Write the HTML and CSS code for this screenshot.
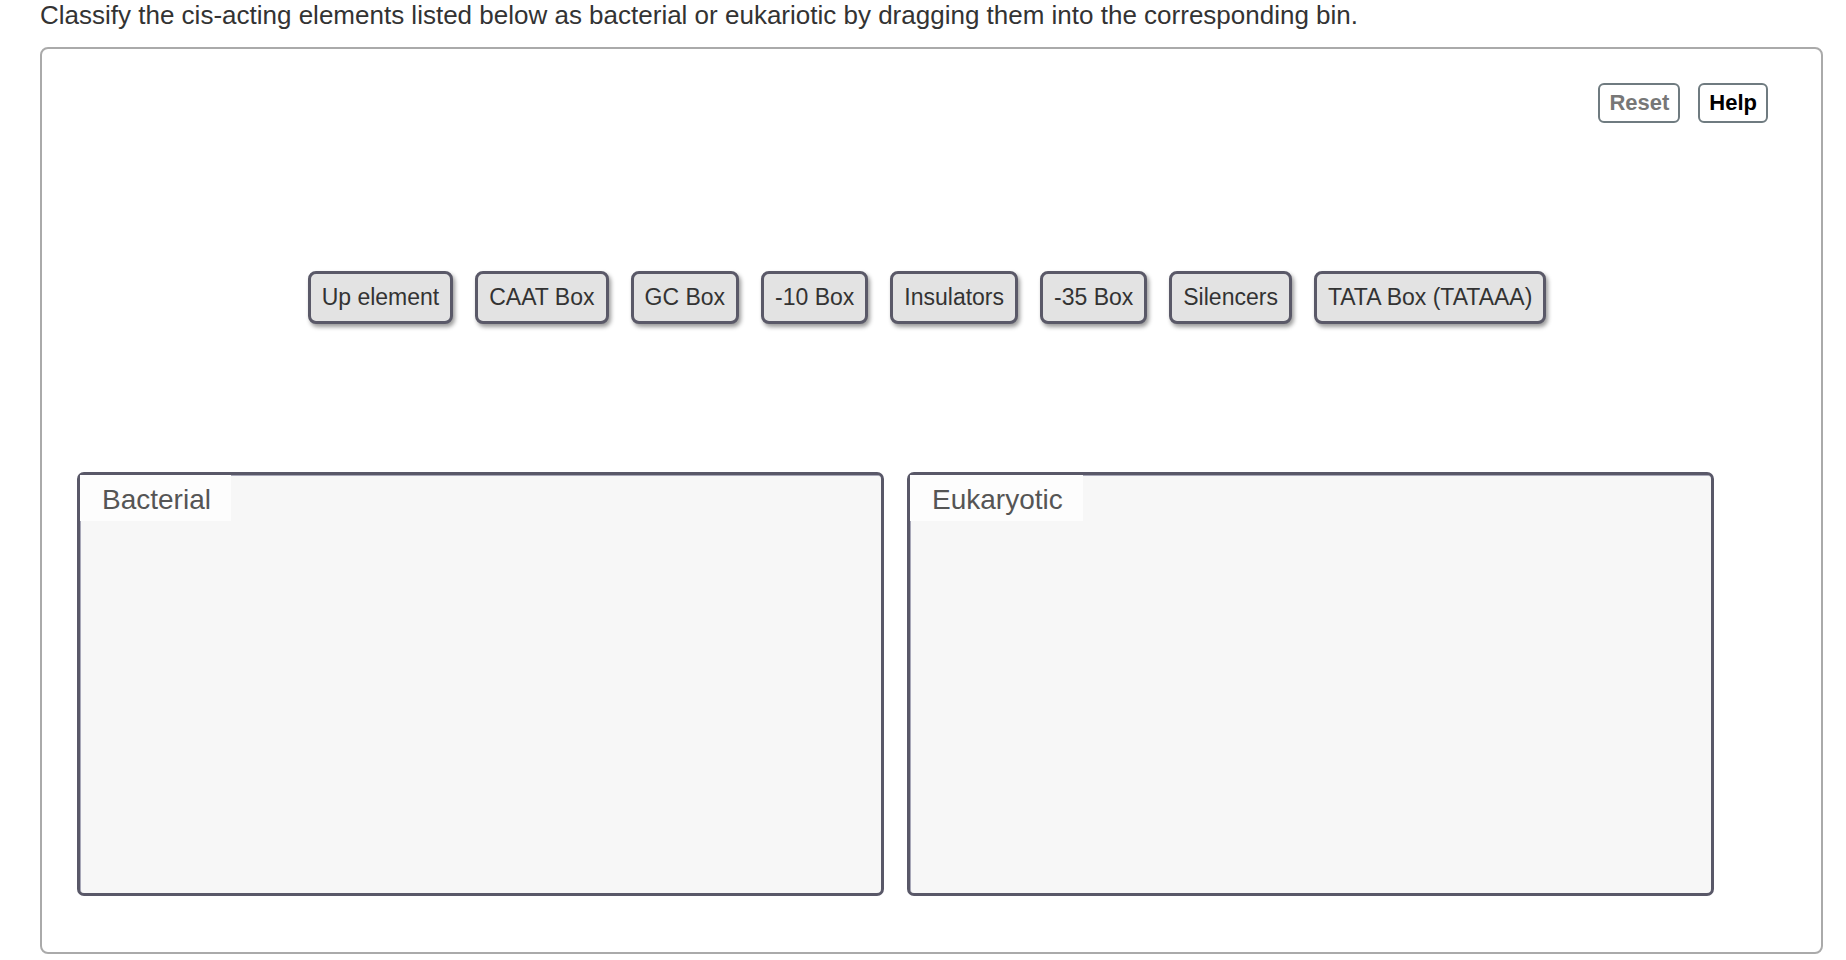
FILE: index.html
```html
<html>

<head>
    <title>Classify cis-acting elements</title>
    <link rel="stylesheet" href="styles.css">
</head>

<body>
    <p class="prompt">Classify the cis-acting elements listed below as bacterial or eukariotic by dragging them into the corresponding bin.</p>
    <div class="activity">
        <div class="toolbar">
            <button class="tool-btn reset">Reset</button>
            <button class="tool-btn help">Help</button>
        </div>
        <div class="tiles">
            <div class="tile">Up element</div>
            <div class="tile">CAAT Box</div>
            <div class="tile">GC Box</div>
            <div class="tile">-10 Box</div>
            <div class="tile">Insulators</div>
            <div class="tile">-35 Box</div>
            <div class="tile">Silencers</div>
            <div class="tile">TATA Box (TATAAA)</div>
        </div>
        <div class="bins">
            <div class="bin">
                <div class="bin-label">Bacterial</div>
            </div>
            <div class="bin">
                <div class="bin-label">Eukaryotic</div>
            </div>
        </div>
    </div>
</body>

</html>
```

FILE: styles.css
```css
body {
    margin: 0;
    font-family: "Liberation Sans", Arial, Helvetica, sans-serif;
    color: #333;
    background: #fff;
}

.prompt {
    margin: 0 0 0 40px;
    font-size: 26px;
    line-height: 30px;
}

.activity {
    margin: 17px 0 0 40px;
    width: 1783px;
    height: 907px;
    box-sizing: border-box;
    border: 2px solid #aaa;
    border-radius: 8px;
}

.toolbar {
    display: flex;
    justify-content: flex-end;
    gap: 18px;
    padding: 34px 53px 0 0;
}

.tool-btn {
    height: 40px;
    box-sizing: border-box;
    border: 2px solid #6f7b80;
    border-radius: 6px;
    background: #fff;
    padding: 0 9px;
    font-family: "Liberation Sans", Arial, Helvetica, sans-serif;
    font-size: 22px;
    font-weight: 700;
}

.reset {
    color: #777;
}

.help {
    color: #000;
}

.tiles {
    display: flex;
    justify-content: center;
    gap: 22px;
    margin-top: 148px;
    padding-right: 9px;
}

.tile {
    height: 53px;
    box-sizing: border-box;
    border: 3px solid #5a5968;
    border-radius: 8px;
    background: #e3e3e3;
    padding: 0 11px;
    font-size: 23px;
    line-height: 47px;
    color: #333;
    box-shadow: 2px 3px 4px rgba(0, 0, 0, 0.4);
}

.bins {
    display: flex;
    gap: 23px;
    margin-top: 148px;
    padding-left: 35px;
}

.bin {
    width: 807px;
    height: 424px;
    box-sizing: border-box;
    border: 3px solid #595868;
    border-radius: 7px;
    background: #f7f7f7;
    box-shadow: inset 1px 1px 0 #a8a8b8;
}

.bin-label {
    display: inline-block;
    background: #fdfdfd;
    padding: 9px 20px 5px 22px;
    font-size: 28px;
    line-height: 32px;
    color: #555;
}
```
